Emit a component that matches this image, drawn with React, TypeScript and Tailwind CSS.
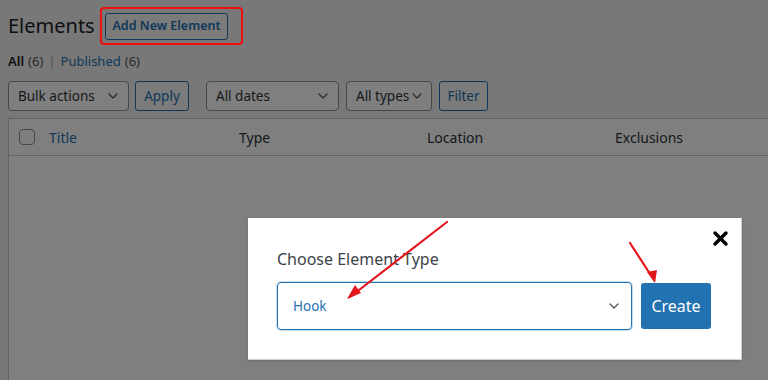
import { ChevronDown } from "lucide-react";

function Select({ label, width }: { label: string; width: string }) {
    return (
        <div
            className={`flex h-[30px] items-center justify-between whitespace-nowrap rounded-[4px] border border-[#8c8f94] bg-white pl-[9px] pr-[7px] text-[13.5px] text-[#2c3338] ${width}`}
        >
            <span>{label}</span>
            <ChevronDown className="h-4 w-4 shrink-0 text-[#50575e]" strokeWidth={2} />
        </div>
    );
}

function OutlineButton({ label, width }: { label: string; width: string }) {
    return (
        <div
            className={`flex h-[30px] items-center justify-center rounded-[3px] border border-[#2271b1] bg-[#f6f7f7] text-[13.5px] text-[#2271b1] ${width}`}
        >
            {label}
        </div>
    );
}

function App() {
    return (
        <div
            className="relative h-[380px] w-[768px] overflow-hidden bg-[#f0f0f1]"
            style={{ fontFamily: '"Noto Sans", "Open Sans", sans-serif' }}
        >
            {/* page */}
            <div className="flex flex-col pl-2">
                <div className="flex h-[52px] items-center">
                    <h1 className="w-[97px] text-[20px] font-normal text-[#1d2327]">Elements</h1>
                    <div className="flex h-[27px] w-[123px] items-center justify-center rounded-[3px] border border-[#2271b1] bg-[#f6f7f7] text-[12.5px] font-semibold text-[#2271b1]">
                        Add New Element
                    </div>
                </div>
                <div className="flex h-[20px] items-center text-[13px] text-[#50575e]">
                    <span className="font-semibold text-[#1d2327]">All</span>
                    <span className="ml-1">(6)</span>
                    <span className="mx-[5px] text-[#a7aaad]">|</span>
                    <span className="text-[#2271b1]">Published</span>
                    <span className="ml-1">(6)</span>
                </div>
                <div className="mt-[9px] flex items-center">
                    <Select label="Bulk actions" width="w-[121px]" />
                    <OutlineButton label="Apply" width="ml-[6px] w-[54px]" />
                    <Select label="All dates" width="ml-[17px] w-[133px]" />
                    <Select label="All types" width="ml-[7px] w-[86px]" />
                    <OutlineButton label="Filter" width="ml-[7px] w-[49px]" />
                </div>
                <div className="mt-[7px] border-l border-t border-[#c3c4c7] bg-white">
                    <div className="flex h-[37px] items-center border-b border-[#c3c4c7] text-[14px] text-[#2c3338]">
                        <div className="ml-[10px] h-4 w-4 rounded-[4px] border border-[#8c8f94] bg-white" />
                        <span className="ml-[14px] w-[190px] text-[#2271b1]">Title</span>
                        <span className="w-[188px]">Type</span>
                        <span className="w-[188px]">Location</span>
                        <span>Exclusions</span>
                    </div>
                    <div className="h-[240px]" />
                </div>
            </div>

            {/* dim overlay */}
            <div className="absolute inset-0 bg-black/50" />

            {/* highlight box around the button */}
            <div className="absolute left-[100px] top-[7px] h-[38px] w-[143px] rounded-[4px] border-2 border-[#ee1111]" />

            {/* modal */}
            <div className="absolute left-[248px] top-[218px] h-[142px] w-[494px] border-r border-b border-[#cfcfcf] bg-white shadow-sm">
                <div className="absolute right-[12px] top-[12px]">
                    <svg width="17" height="17" viewBox="0 0 17 17">
                        <path d="M3 3 L14 14 M14 3 L3 14" stroke="#000" strokeWidth="3.4" strokeLinecap="round" />
                    </svg>
                </div>
                <div className="flex flex-col px-[29px] pt-[29px]">
                    <div className="text-[16px] text-[#3c434a]">Choose Element Type</div>
                    <div className="mt-[11px] flex items-center gap-[9px]">
                        <div className="flex h-[48px] w-[355px] items-center justify-between rounded-[4px] border border-[#2271b1] pl-[15px] pr-[9px] text-[13.5px] text-[#2271b1] shadow-[0_0_0_1px_rgba(34,113,177,0.25)]">
                            <span>Hook</span>
                            <ChevronDown className="h-4 w-4 text-[#50575e]" strokeWidth={2} />
                        </div>
                        <div className="flex h-[46px] w-[70px] items-center justify-center rounded-[3px] bg-[#2271b1] text-[16px] text-white">
                            Create
                        </div>
                    </div>
                </div>
            </div>

            {/* annotation arrows */}
            <svg className="absolute inset-0" width="768" height="380" viewBox="0 0 768 380">
                <g stroke="#e3161d" strokeWidth="2.2" fill="none" strokeLinecap="round">
                    <line x1="447" y1="222" x2="350" y2="297" />
                    <line x1="630" y1="243" x2="654" y2="280" />
                </g>
                <g fill="#e3161d">
                    <polygon points="347,299 355,285 361,293" />
                    <polygon points="655,283 647,272 657,270" />
                </g>
            </svg>
        </div>
    );
}

export default App;
